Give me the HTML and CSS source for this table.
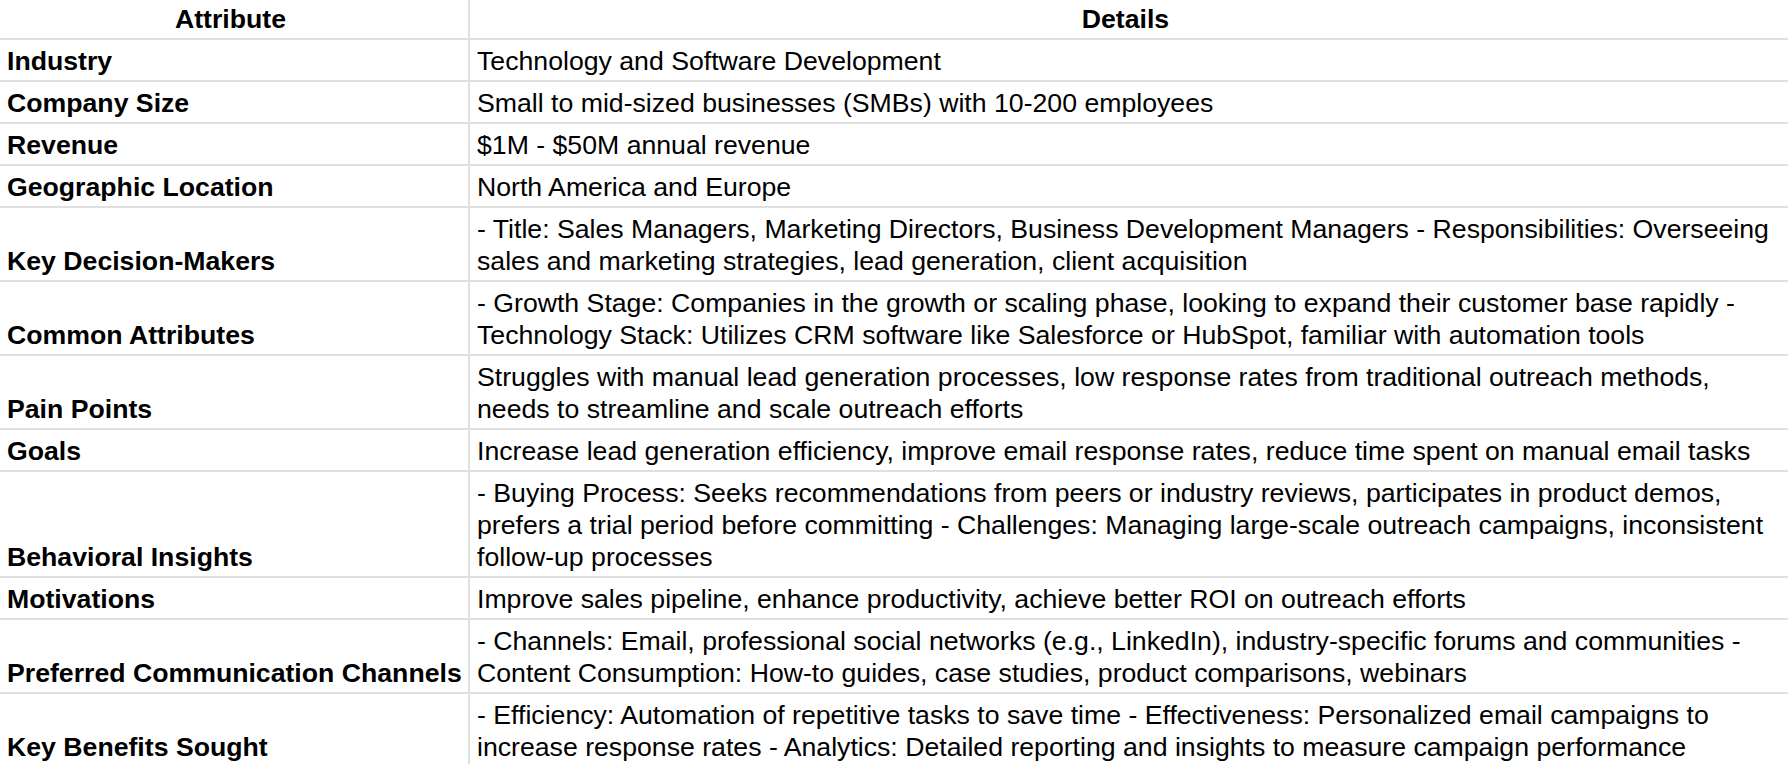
FILE: index.html
```html
<!DOCTYPE html>
<html lang="en">
<head>
<meta charset="utf-8">
<title>Ideal Customer Profile</title>
<link rel="stylesheet" href="styles.css">
</head>
<body>
<table class="profile">
  <colgroup>
    <col class="col-attr">
    <col class="col-details">
  </colgroup>
  <thead>
    <tr>
      <th class="attr">Attribute</th>
      <th class="details">Details</th>
    </tr>
  </thead>
  <tbody>
    <tr><td class="attr">Industry</td><td class="details">Technology and Software Development</td></tr>
    <tr><td class="attr">Company Size</td><td class="details">Small to mid-sized businesses (SMBs) with 10-200 employees</td></tr>
    <tr><td class="attr">Revenue</td><td class="details">$1M - $50M annual revenue</td></tr>
    <tr><td class="attr">Geographic Location</td><td class="details">North America and Europe</td></tr>
    <tr><td class="attr">Key Decision-Makers</td><td class="details">- Title: Sales Managers, Marketing Directors, Business Development Managers - Responsibilities: Overseeing sales and marketing strategies, lead generation, client acquisition</td></tr>
    <tr><td class="attr">Common Attributes</td><td class="details">- Growth Stage: Companies in the growth or scaling phase, looking to expand their customer base rapidly - Technology Stack: Utilizes CRM software like Salesforce or HubSpot, familiar with automation tools</td></tr>
    <tr><td class="attr">Pain Points</td><td class="details">Struggles with manual lead generation processes, low response rates from traditional outreach methods, needs to streamline and scale outreach efforts</td></tr>
    <tr><td class="attr">Goals</td><td class="details">Increase lead generation efficiency, improve email response rates, reduce time spent on manual email tasks</td></tr>
    <tr><td class="attr">Behavioral Insights</td><td class="details">- Buying Process: Seeks recommendations from peers or industry reviews, participates in product demos, prefers a trial period before committing - Challenges: Managing large-scale outreach campaigns, inconsistent follow-up processes</td></tr>
    <tr><td class="attr">Motivations</td><td class="details">Improve sales pipeline, enhance productivity, achieve better ROI on outreach efforts</td></tr>
    <tr><td class="attr">Preferred Communication Channels</td><td class="details">- Channels: Email, professional social networks (e.g., LinkedIn), industry-specific forums and communities - Content Consumption: How-to guides, case studies, product comparisons, webinars</td></tr>
    <tr><td class="attr">Key Benefits Sought</td><td class="details">- Efficiency: Automation of repetitive tasks to save time - Effectiveness: Personalized email campaigns to increase response rates - Analytics: Detailed reporting and insights to measure campaign performance</td></tr>
  </tbody>
</table>
</body>
</html>
```

FILE: styles.css
```css
html, body {
  margin: 0;
  padding: 0;
  background: #ffffff;
}

body {
  font-family: "Liberation Sans", Arial, Helvetica, sans-serif;
  font-size: 26.667px;
  line-height: 32px;
  color: #000000;
}

.profile {
  width: 1788px;
  table-layout: fixed;
  border-collapse: separate;
  border-spacing: 0;
}

.col-attr {
  width: 470px;
}

.profile th,
.profile td {
  padding: 5px 14px 3px 7px;
  border-bottom: 2px solid #e0e0e0;
  text-align: left;
  vertical-align: bottom;
}

.profile th {
  padding-top: 3px;
  padding-bottom: 3px;
  font-weight: bold;
  text-align: center;
}

.profile .attr {
  border-right: 2px solid #e0e0e0;
  font-weight: bold;
  white-space: nowrap;
}

.profile td.details {
  vertical-align: top;
}
```
